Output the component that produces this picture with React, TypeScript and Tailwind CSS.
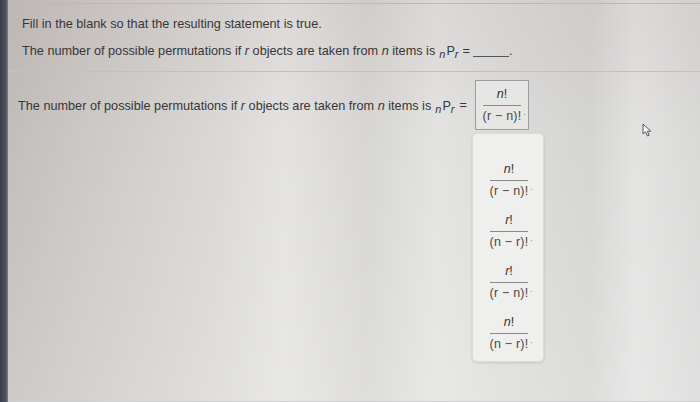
import React from "react";

const font = { fontFamily: '"Liberation Sans", Arial, sans-serif' };

// stacked fraction with a trailing period, like the answer choices
function Fraction({ num, den }: { num: React.ReactNode; den: React.ReactNode }) {
  return (
    <span className="inline-flex items-end">
      <span className="inline-flex flex-col items-center">
        <span className="px-[3px] leading-[14px] text-[12.5px] text-[#333]">{num}</span>
        <span className="mt-[4px] h-px w-[38px] bg-[#8a8a8a]" />
        <span className="mt-[3px] leading-[14px] text-[12.5px] text-[#4a4a4a]">{den}</span>
      </span>
      <span className="ml-[2px] mb-[7px] text-[7px] leading-none">.</span>
    </span>
  );
}

const Fact = ({ v }: { v: string }) => (
  <>
    <i>{v}</i>!
  </>
);

const Den = ({ a, b }: { a: string; b: string }) => (
  <span className="tracking-[0.2px]">
    ({a} − {b})!
  </span>
);

function Npr() {
  return (
    <span className="inline-flex items-baseline">
      <sub className="text-[11px] italic relative top-[3px]">n</sub>
      <span className="ml-[1px]">P</span>
      <sub className="text-[11px] italic relative top-[3px]">r</sub>
    </span>
  );
}

const options = [
  { num: "n", a: "r", b: "n" },
  { num: "r", a: "n", b: "r" },
  { num: "r", a: "r", b: "n" },
  { num: "n", a: "n", b: "r" },
];

export default function App() {
  return (
    <div className="flex w-[700px] h-[402px] overflow-hidden" style={font}>
      <div className="w-[8px] shrink-0 bg-[linear-gradient(90deg,#3a3d48,#4b505d_70%,#7d808a)]" />
      <div className="relative flex-1 flex flex-col text-[#363636] text-[12.7px] bg-[linear-gradient(180deg,rgba(150,120,120,0.10),transparent_35%,rgba(255,255,255,0.18)),linear-gradient(90deg,#c2bebb,#ccc9c6_12%,#dad8d6_30%,#e4e3e1_40%,#d7d6d4_52%,#e3e3e1_62%,#dcdcda_72%,#d5d5d3_84%,#e3e3e2_91%,#d9d9d8)]">
        <div className="mt-[3px] border-t border-[#bdb8b5]" />

        <div className="pl-[14px] pt-[13px] flex flex-col gap-[12px] pb-[12px]">
          <p className="leading-[15px]">Fill in the blank so that the resulting statement is true.</p>
          <p className="leading-[15px] flex items-baseline">
            <span>
              The number of possible permutations if <i>r</i> objects are taken from <i>n</i> items is
            </span>
            <span className="ml-[4px]">
              <Npr />
            </span>
            <span className="ml-[4px]">=</span>
            <span className="ml-[3px] inline-block w-[36px] border-b border-[#555] translate-y-[2px]" />
            <span>.</span>
          </p>
        </div>

        <div className="border-t border-[#c4c0bd]" />

        <div className="pl-[10px] pt-[8px] flex items-center">
          <span className="translate-y-[2px]">
            The number of possible permutations if <i>r</i> objects are taken from <i>n</i> items is
          </span>
          <span className="ml-[4px] translate-y-[2px]">
            <Npr />
          </span>
          <span className="ml-[5px] translate-y-[1px]">=</span>
          <div className="relative ml-[8px]">
            <div className="w-[54px] h-[50px] border border-[#9c9c9c] bg-[#e6e6e4] flex items-center justify-center pl-[4px]">
              <Fraction num={<Fact v="n" />} den={<Den a="r" b="n" />} />
            </div>

            {/* answer choices menu */}
            <div className="absolute left-[-3px] top-[53px] w-[72px] h-[229px] overflow-hidden pt-[28px] rounded-[5px] bg-[#efefee] border border-[#dcdcdb] shadow-[0_1px_3px_rgba(0,0,0,0.12)] flex flex-col">
              {options.map((o, i) => (
                <div key={i} className="h-[51px] shrink-0 flex items-start justify-center pl-[6px]">
                  <Fraction num={<Fact v={o.num} />} den={<Den a={o.a} b={o.b} />} />
                </div>
              ))}
            </div>
          </div>
        </div>

        {/* mouse pointer */}
        <svg className="absolute left-[634px] top-[123px]" width="12" height="14" viewBox="0 0 12 14">
          <path d="M1 1 L1 11 L3.5 8.8 L5.5 13 L7.2 12.2 L5.3 8.2 L8.8 8.2 Z" fill="#f4f4f4" stroke="#555" strokeWidth="1" strokeLinejoin="round" />
        </svg>

        <div className="mt-auto border-b border-[#cfcfcf]" />
      </div>
    </div>
  );
}
